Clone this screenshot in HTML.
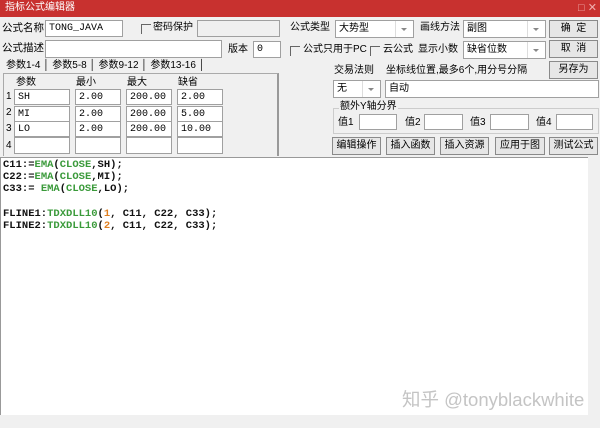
<!DOCTYPE html>
<html><head><meta charset="utf-8"><style>
*{box-sizing:border-box;margin:0;padding:0}
body{width:600px;height:428px;overflow:hidden;background:#f0f0f0;font-family:"Liberation Sans","Noto Sans CJK SC",sans-serif;font-size:10px;color:#000;position:relative}
.a{position:absolute;white-space:nowrap;line-height:14px}
.in{position:absolute;background:#fff;border:1px solid #a0a0a0;font-family:"Liberation Mono",monospace;font-size:10px;padding:1px 3px;line-height:13px}
.btn{position:absolute;background:#e6e6e6;border:1px solid #8a8a8a;text-align:center;line-height:15px;font-size:10px}
.cb{position:absolute;width:10px;height:10px;border-left:1px solid #666;border-top:1px solid #666}
.sel{position:absolute;background:#fff;border:1px solid #a0a0a0;padding:1px 3px;line-height:14px}
.sel:after{content:"";position:absolute;right:0;top:0;bottom:0;width:17px;border-left:1px solid #ddd}
.sel i{position:absolute;right:6px;top:7px;border:3px solid transparent;border-top:3px solid #888;z-index:2}
pre{position:absolute;left:3px;top:159px;font-family:"Liberation Mono",monospace;font-weight:bold;font-size:10.5px;line-height:12.2px;color:#111}
.g{color:#3a9a3a}.o{color:#e08020}
</style></head><body>
<div style="position:absolute;left:0;top:0;width:600px;height:17px;background:#c8312f"></div>
<div class="a" style="left:5px;top:1px;color:#fff;font-size:10px">指标公式编辑器</div>
<div class="a" style="left:578px;top:1px;color:#f0b0b0;font-size:11px">□ ✕</div>

<div class="a" style="left:2px;top:21px;font-size:10.5px">公式名称</div>
<div class="in" style="left:45px;top:20px;width:78px;height:17px">TONG_JAVA</div>
<div class="cb" style="left:141px;top:24px"></div>
<div class="a" style="left:153px;top:21px">密码保护</div>
<div class="in" style="left:197px;top:20px;width:83px;height:17px;background:#f0f0f0"></div>
<div class="a" style="left:290px;top:21px">公式类型</div>
<div class="sel" style="left:335px;top:20px;width:79px;height:18px">大势型<i></i></div>
<div class="a" style="left:420px;top:21px">画线方法</div>
<div class="sel" style="left:463px;top:20px;width:83px;height:18px">副图<i></i></div>
<div class="btn" style="left:549px;top:20px;width:49px;height:18px">确&nbsp;&nbsp;定</div>

<div class="a" style="left:2px;top:41px;font-size:10.5px">公式描述</div>
<div class="in" style="left:45px;top:40px;width:177px;height:18px"></div>
<div class="a" style="left:228px;top:43px">版本</div>
<div class="in" style="left:253px;top:41px;width:28px;height:17px">0</div>
<div class="cb" style="left:290px;top:46px"></div>
<div class="a" style="left:303px;top:43px">公式只用于PC</div>
<div class="cb" style="left:370px;top:46px"></div>
<div class="a" style="left:383px;top:43px">云公式</div>
<div class="a" style="left:418px;top:43px">显示小数</div>
<div class="sel" style="left:463px;top:41px;width:83px;height:18px">缺省位数<i></i></div>
<div class="btn" style="left:549px;top:40px;width:49px;height:18px">取&nbsp;&nbsp;消</div>

<div class="a" style="left:6px;top:59px;font-size:10px">参数1-4 │ 参数5-8 │ 参数9-12 │ 参数13-16 │</div>
<div style="position:absolute;left:3px;top:73px;width:276px;height:83px;border:1px solid #aaa;border-bottom:none;border-right:2px solid #999"></div>
<div class="a" style="left:16px;top:76px">参数</div>
<div class="a" style="left:76px;top:76px">最小</div>
<div class="a" style="left:127px;top:76px">最大</div>
<div class="a" style="left:178px;top:76px">缺省</div>
<div class="a" style="left:6px;top:90px">1</div>
<div class="a" style="left:6px;top:106px">2</div>
<div class="a" style="left:6px;top:122px">3</div>
<div class="a" style="left:6px;top:139px">4</div>
<div class="in" style="left:14px;top:89px;width:56px;height:16px">SH</div>
<div class="in" style="left:75px;top:89px;width:46px;height:16px">2.00</div>
<div class="in" style="left:126px;top:89px;width:46px;height:16px">200.00</div>
<div class="in" style="left:177px;top:89px;width:46px;height:16px">2.00</div>
<div class="in" style="left:14px;top:106px;width:56px;height:16px">MI</div>
<div class="in" style="left:75px;top:106px;width:46px;height:16px">2.00</div>
<div class="in" style="left:126px;top:106px;width:46px;height:16px">200.00</div>
<div class="in" style="left:177px;top:106px;width:46px;height:16px">5.00</div>
<div class="in" style="left:14px;top:121px;width:56px;height:16px">LO</div>
<div class="in" style="left:75px;top:121px;width:46px;height:16px">2.00</div>
<div class="in" style="left:126px;top:121px;width:46px;height:16px">200.00</div>
<div class="in" style="left:177px;top:121px;width:46px;height:16px">10.00</div>
<div class="in" style="left:14px;top:137px;width:56px;height:17px"></div>
<div class="in" style="left:75px;top:137px;width:46px;height:17px"></div>
<div class="in" style="left:126px;top:137px;width:46px;height:17px"></div>
<div class="in" style="left:177px;top:137px;width:46px;height:17px"></div>

<div class="a" style="left:334px;top:64px">交易法则</div>
<div class="a" style="left:386px;top:64px">坐标线位置,最多6个,用分号分隔</div>
<div class="btn" style="left:549px;top:61px;width:49px;height:18px">另存为</div>
<div class="sel" style="left:333px;top:80px;width:48px;height:18px">无<i></i></div>
<div class="in" style="left:385px;top:80px;width:214px;height:18px;font-family:'Liberation Sans','Noto Sans CJK SC',sans-serif">自动</div>
<div style="position:absolute;left:333px;top:108px;width:266px;height:26px;border:1px solid #ccc"></div>
<div class="a" style="left:339px;top:100px;background:#f0f0f0;padding:0 1px">额外Y轴分界</div>
<div class="a" style="left:338px;top:116px">值1</div>
<div class="in" style="left:359px;top:114px;width:38px;height:16px"></div>
<div class="a" style="left:405px;top:116px">值2</div>
<div class="in" style="left:424px;top:114px;width:39px;height:16px"></div>
<div class="a" style="left:470px;top:116px">值3</div>
<div class="in" style="left:490px;top:114px;width:39px;height:16px"></div>
<div class="a" style="left:536px;top:116px">值4</div>
<div class="in" style="left:556px;top:114px;width:37px;height:16px"></div>
<div class="btn" style="left:332px;top:137px;width:49px;height:18px">编辑操作</div>
<div class="btn" style="left:386px;top:137px;width:49px;height:18px">插入函数</div>
<div class="btn" style="left:440px;top:137px;width:49px;height:18px">插入资源</div>
<div class="btn" style="left:495px;top:137px;width:50px;height:18px">应用于图</div>
<div class="btn" style="left:549px;top:137px;width:49px;height:18px">测试公式</div>

<div style="position:absolute;left:0;top:157px;width:588px;height:258px;background:#fff;border-top:1px solid #999;border-left:1px solid #999"></div>
<div style="position:absolute;left:588px;top:157px;width:12px;height:258px;background:#f0f0f0"></div>
<div style="position:absolute;left:0;top:415px;width:600px;height:13px;background:#f0f0f0"></div>
<pre>C11:=<span class="g">EMA</span>(<span class="g">CLOSE</span>,SH);
C22:=<span class="g">EMA</span>(<span class="g">CLOSE</span>,MI);
C33:= <span class="g">EMA</span>(<span class="g">CLOSE</span>,LO);

FLINE1:<span class="g">TDXDLL10</span>(<span class="o">1</span>, C11, C22, C33);
FLINE2:<span class="g">TDXDLL10</span>(<span class="o">2</span>, C11, C22, C33);</pre>
<div class="a" style="left:402px;top:389px;font-size:18.5px;line-height:22px;color:#c4c4c4">知乎 @tonyblackwhite</div>
</body></html>
